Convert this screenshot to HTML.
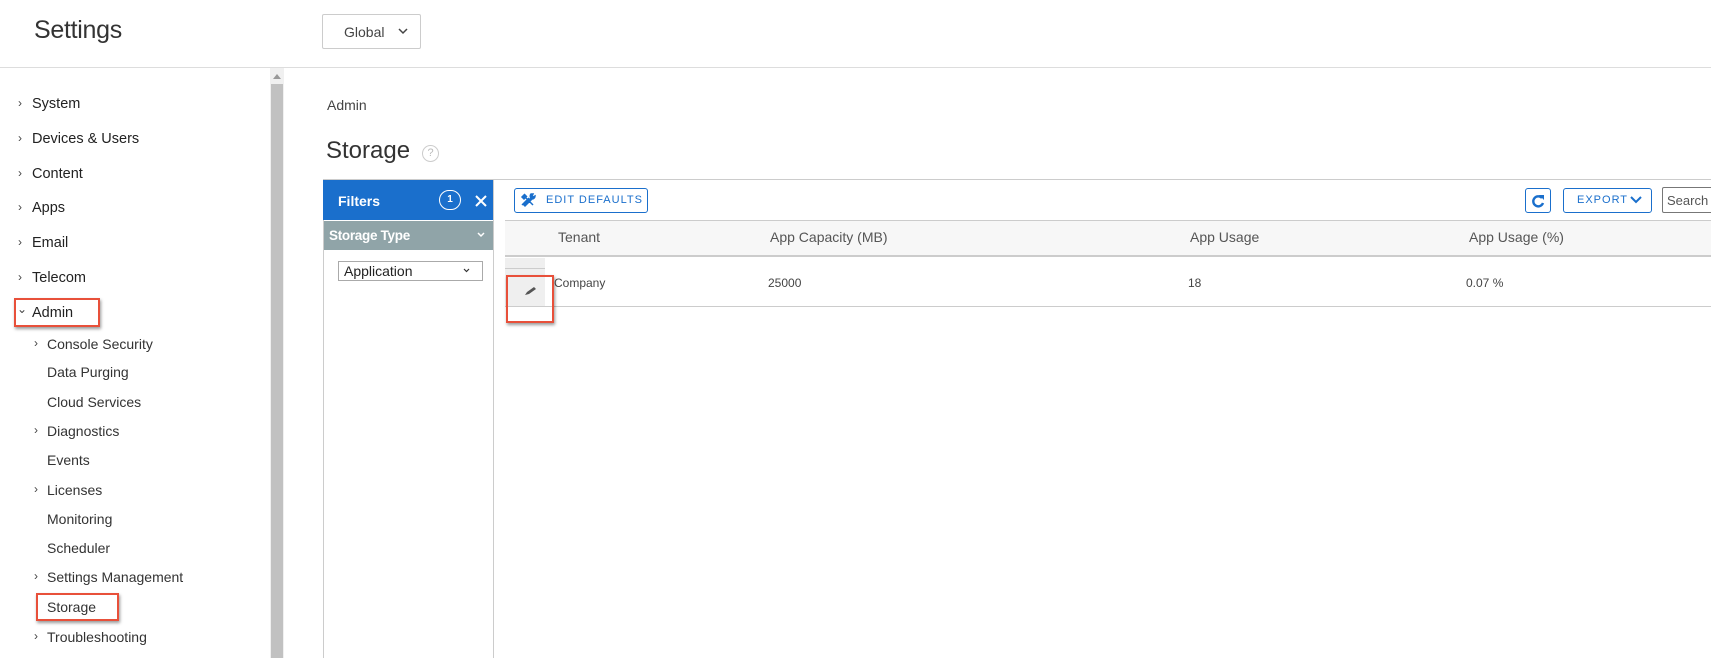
<!DOCTYPE html>
<html><head><meta charset="utf-8"><style>
*{margin:0;padding:0;box-sizing:border-box}
body{width:1711px;height:658px;overflow:hidden;background:#fff;font-family:"Liberation Sans",sans-serif;color:#333;position:relative}
.a{position:absolute;white-space:nowrap}
.nav{font-size:14.5px;color:#222;line-height:18px}
.sub{font-size:14px;color:#333;line-height:18px}
.chev{font-size:12px;color:#444}
.red{position:absolute;border:2px solid #e8503a;box-shadow:1px 2px 3px rgba(0,0,0,.4)}
.th{font-size:14px;color:#555}
.td{font-size:12px;color:#444}
</style></head><body>
<div class="a" style="left:34px;top:16px;font-size:25px;color:#333;letter-spacing:-.3px">Settings</div>
<div class="a" style="left:322px;top:14px;width:99px;height:35px;border:1px solid #ccc;border-radius:2px;font-size:14px;color:#444;padding:9px 0 0 21px">Global</div>
<svg class="a" style="left:398px;top:28px" width="10" height="7" viewBox="0 0 10 7"><path d="M1 1l4 4 4-4" stroke="#444" stroke-width="1.5" fill="none"/></svg>
<div class="a" style="left:0;top:67px;width:1711px;height:1px;background:#ddd"></div>
<div class="a" style="left:270px;top:68px;width:14px;height:590px;background:#f0f0f0"></div>
<div class="a" style="left:271px;top:84px;width:12px;height:574px;background:#c1c1c1"></div>
<div class="a" style="left:273px;top:74px;width:0;height:0;border-left:4px solid transparent;border-right:4px solid transparent;border-bottom:5px solid #999"></div>

<div class="a chev" style="left:18px;top:96px">›</div><div class="a nav" style="left:32px;top:95px">System</div>
<div class="a chev" style="left:18px;top:131px">›</div><div class="a nav" style="left:32px;top:130px">Devices &amp; Users</div>
<div class="a chev" style="left:18px;top:166px">›</div><div class="a nav" style="left:32px;top:165px">Content</div>
<div class="a chev" style="left:18px;top:200px">›</div><div class="a nav" style="left:32px;top:199px">Apps</div>
<div class="a chev" style="left:18px;top:235px">›</div><div class="a nav" style="left:32px;top:234px">Email</div>
<div class="a chev" style="left:18px;top:270px">›</div><div class="a nav" style="left:32px;top:269px">Telecom</div>
<div class="a chev" style="left:17px;top:302px">&#8964;</div><div class="a nav" style="left:32px;top:304px">Admin</div>
<div class="red" style="left:14px;top:298px;width:86px;height:29px"></div>

<div class="a chev" style="left:34px;top:336px">›</div><div class="a sub" style="left:47px;top:335px">Console Security</div>
<div class="a sub" style="left:47px;top:363px">Data Purging</div>
<div class="a sub" style="left:47px;top:393px">Cloud Services</div>
<div class="a chev" style="left:34px;top:423px">›</div><div class="a sub" style="left:47px;top:422px">Diagnostics</div>
<div class="a sub" style="left:47px;top:451px">Events</div>
<div class="a chev" style="left:34px;top:482px">›</div><div class="a sub" style="left:47px;top:481px">Licenses</div>
<div class="a sub" style="left:47px;top:510px">Monitoring</div>
<div class="a sub" style="left:47px;top:539px">Scheduler</div>
<div class="a chev" style="left:34px;top:569px">›</div><div class="a sub" style="left:47px;top:568px">Settings Management</div>
<div class="a sub" style="left:47px;top:598px">Storage</div>
<div class="red" style="left:36px;top:593px;width:83px;height:28px"></div>
<div class="a chev" style="left:34px;top:629px">›</div><div class="a sub" style="left:47px;top:628px">Troubleshooting</div>

<div class="a" style="left:327px;top:97px;font-size:14px;color:#444">Admin</div>
<div class="a" style="left:326px;top:137px;font-size:24px;color:#333">Storage</div>
<div class="a" style="left:422px;top:145px;width:17px;height:17px;border:1px solid #ccc;border-radius:50%;font-size:11px;color:#bbb;text-align:center;line-height:15px">?</div>

<div class="a" style="left:323px;top:179px;width:1388px;height:1px;background:#ccc"></div>
<div class="a" style="left:323px;top:179px;width:1px;height:479px;background:#ccc"></div>
<div class="a" style="left:493px;top:179px;width:1px;height:479px;background:#ccc"></div>
<div class="a" style="left:323px;top:180px;width:170px;height:40px;background:#1a6fcc"></div>
<div class="a" style="left:338px;top:193px;font-size:14px;color:#fff;font-weight:bold">Filters</div>
<div class="a" style="left:439px;top:190px;width:22px;height:20px;border:1.5px solid #fff;border-radius:10px;color:#fff;font-size:10px;text-align:center;line-height:17px;font-weight:bold">1</div>
<svg class="a" style="left:475px;top:195px" width="12" height="12" viewBox="0 0 12 12"><path d="M1 1l10 10M11 1L1 11" stroke="#fff" stroke-width="2"/></svg>
<div class="a" style="left:324px;top:221px;width:169px;height:29px;background:#90a4a8"></div>
<div class="a" style="left:329px;top:228px;font-size:13.5px;color:#fff;font-weight:bold;letter-spacing:-.3px">Storage Type</div>
<svg class="a" style="left:477px;top:232px" width="8" height="6" viewBox="0 0 8 6"><path d="M1 1l3 3 3-3" stroke="#fff" stroke-width="1.5" fill="none"/></svg>
<div class="a" style="left:338px;top:261px;width:145px;height:20px;border:1px solid #aaa;font-size:14px;color:#222;padding:1px 0 0 5px">Application</div>
<svg class="a" style="left:463px;top:268px" width="7" height="5" viewBox="0 0 7 5"><path d="M1 1l2.5 2.5L6 1" stroke="#333" stroke-width="1.2" fill="none"/></svg>

<div class="a" style="left:514px;top:188px;width:134px;height:25px;border:1px solid #1a6fcc;border-radius:3px;color:#1a6fcc;font-size:11px;letter-spacing:1px;padding:5px 0 0 31px">EDIT DEFAULTS</div>
<svg class="a" style="left:520px;top:192px" width="16" height="16" viewBox="0 0 16 16"><path d="M2 13L9 6M3 3l10 10M5 2l-3 3 2 2 3-3M11 2a3 3 0 0 0 0 4l-7 7 1 1 7-7a3 3 0 0 0 3-3l-2 1-1-1 1-2z" stroke="#1a6fcc" stroke-width="1.5" fill="#1a6fcc"/></svg>
<div class="a" style="left:1525px;top:188px;width:26px;height:25px;border:1px solid #1a6fcc;border-radius:3px"></div>
<svg class="a" style="left:1530px;top:193px" width="16" height="16" viewBox="0 0 16 16"><path d="M12 5a5 5 0 1 0 1 5" stroke="#1a6fcc" stroke-width="2.4" fill="none"/><path d="M9 2l5 0 0 5z" fill="#1a6fcc"/></svg>
<div class="a" style="left:1563px;top:188px;width:89px;height:25px;border:1px solid #1a6fcc;border-radius:3px;color:#1a6fcc;font-size:11px;letter-spacing:1px;padding:5px 0 0 13px">EXPORT</div>
<svg class="a" style="left:1630px;top:196px" width="12" height="9" viewBox="0 0 12 9"><path d="M1 1l5 5 5-5" stroke="#1a6fcc" stroke-width="2" fill="none"/></svg>
<div class="a" style="left:1662px;top:187px;width:60px;height:26px;border:1px solid #777;border-radius:2px;font-size:13px;color:#555;padding:5px 0 0 4px">Search L</div>

<div class="a" style="left:505px;top:220px;width:1206px;height:1px;background:#ccc"></div>
<div class="a" style="left:505px;top:221px;width:1206px;height:35px;background:#f7f7f7"></div>
<div class="a" style="left:505px;top:255px;width:1206px;height:2px;background:#ccc"></div>
<div class="a th" style="left:558px;top:229px">Tenant</div>
<div class="a th" style="left:770px;top:229px">App Capacity (MB)</div>
<div class="a th" style="left:1190px;top:229px">App Usage</div>
<div class="a th" style="left:1469px;top:229px">App Usage (%)</div>
<div class="a" style="left:505px;top:306px;width:1206px;height:1px;background:#ccc"></div>
<div class="a" style="left:505px;top:258px;width:40px;height:48px;background:#efefef"></div>
<div class="a" style="left:505px;top:268px;width:40px;height:1px;background:#ccc"></div>
<svg class="a" style="left:524px;top:286px" width="14" height="10" viewBox="0 0 14 10"><path d="M1 9l2-3 7-5 2 2-7 5z" fill="#555"/></svg>
<div class="red" style="left:506px;top:275px;width:48px;height:48px"></div>
<div class="a td" style="left:554px;top:276px">Company</div>
<div class="a td" style="left:768px;top:276px">25000</div>
<div class="a td" style="left:1188px;top:276px">18</div>
<div class="a td" style="left:1466px;top:276px">0.07 %</div>
</body></html>
